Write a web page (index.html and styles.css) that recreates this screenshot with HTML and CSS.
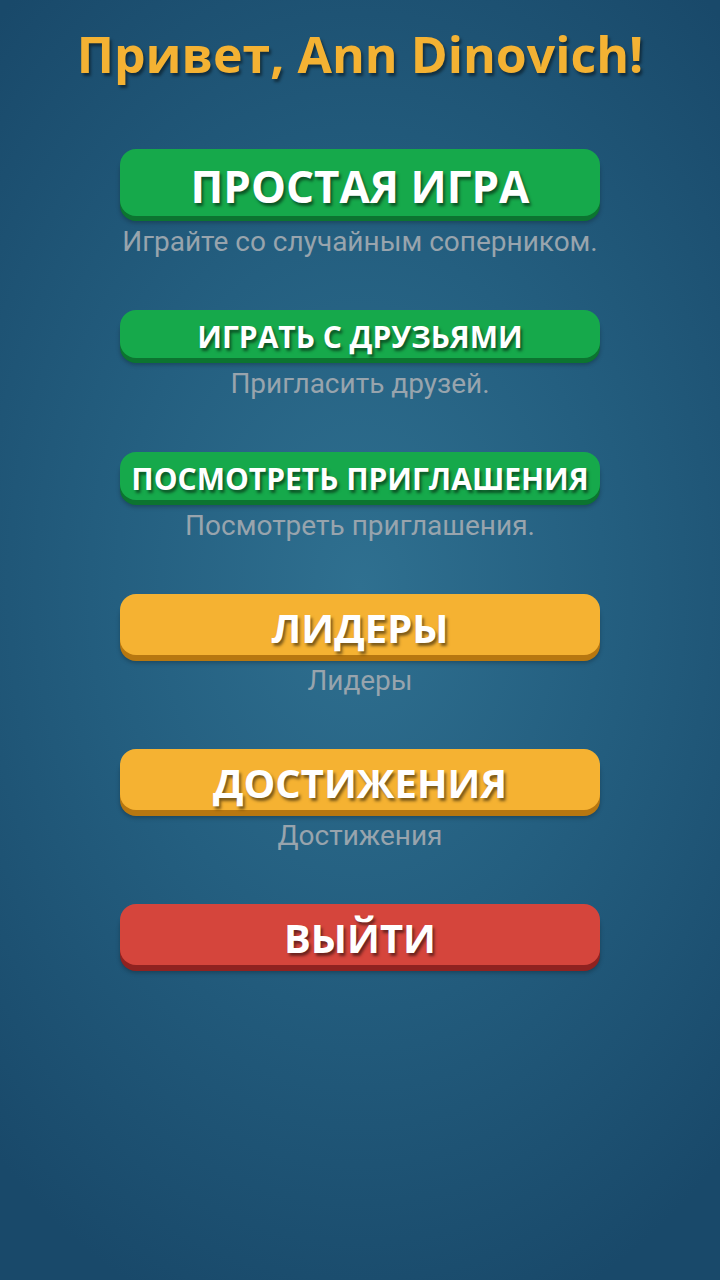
FILE: index.html
```html
<!DOCTYPE html>
<html lang="ru">
<head>
<meta charset="utf-8">
<link rel="stylesheet" href="styles.css">
</head>
<body>
<main class="screen">
  <h1 class="greeting">Привет, Ann Dinovich!</h1>
  <div class="menu">
    <section class="item">
      <button class="btn btn-green btn-xl">ПРОСТАЯ ИГРА</button>
      <p class="hint">Играйте со случайным соперником.</p>
    </section>
    <section class="item">
      <button class="btn btn-green btn-sm">ИГРАТЬ С ДРУЗЬЯМИ</button>
      <p class="hint">Пригласить друзей.</p>
    </section>
    <section class="item">
      <button class="btn btn-green btn-sm">ПОСМОТРЕТЬ ПРИГЛАШЕНИЯ</button>
      <p class="hint">Посмотреть приглашения.</p>
    </section>
    <section class="item">
      <button class="btn btn-yellow btn-md">ЛИДЕРЫ</button>
      <p class="hint">Лидеры</p>
    </section>
    <section class="item">
      <button class="btn btn-yellow btn-md">ДОСТИЖЕНИЯ</button>
      <p class="hint">Достижения</p>
    </section>
    <section class="item">
      <button class="btn btn-red btn-md">ВЫЙТИ</button>
    </section>
  </div>
</main>
</body>
</html>
```
FILE: styles.css
```css
html, body {
  margin: 0;
  padding: 0;
  height: 100%;
}
body {
  background: radial-gradient(ellipse 75% 60% at 50% 46%, #2f7090 0%, #245f80 45%, #19496a 100%);
  background-color: #19496a;
  font-family: "Open Sans", "Liberation Sans", sans-serif;
}
.screen {
  display: flex;
  flex-direction: column;
  align-items: center;
  padding-top: 19px;
  min-height: 1280px;
  box-sizing: border-box;
}
.greeting {
  margin: 0;
  font-family: "Open Sans", sans-serif;
  font-weight: 700;
  font-size: 50px;
  line-height: 70px;
  color: #f4b233;
  text-shadow: 2px 3px 3px rgba(0, 0, 0, 0.45);
}
.menu {
  margin-top: 60px;
  display: flex;
  flex-direction: column;
  gap: 53px;
  width: 480px;
}
.item {
  display: flex;
  flex-direction: column;
  align-items: center;
  gap: 11px;
}
.btn {
  width: 480px;
  border: 0;
  border-radius: 16px;
  padding: 0;
  color: #ffffff;
  font-family: "Open Sans", sans-serif;
  font-weight: 700;
  text-align: center;
  white-space: nowrap;
  text-shadow: 2px 3px 3px rgba(0, 0, 0, 0.5);
  cursor: pointer;
}
.btn-xl {
  height: 67px;
  font-size: 44px;
  padding-top: 6px;
}
.btn-sm {
  height: 48px;
  font-size: 30px;
  padding-top: 5px;
}
.btn-md {
  height: 61px;
  font-size: 40px;
  padding-top: 6px;
}
.btn-green {
  background: #16a94b;
  box-shadow: 0 5px 0 #0c7430, 0 7px 4px rgba(0, 0, 0, 0.25);
}
.btn-yellow {
  background: #f5b232;
  box-shadow: 0 6px 0 #b77710, 0 8px 4px rgba(0, 0, 0, 0.25);
}
.btn-red {
  background: #d5453c;
  box-shadow: 0 6px 0 #8f2220, 0 8px 4px rgba(0, 0, 0, 0.25);
}
.hint {
  margin: 0;
  font-family: Roboto, "Liberation Sans", sans-serif;
  font-size: 28px;
  line-height: 30px;
  color: #98a4ad;
}
```
